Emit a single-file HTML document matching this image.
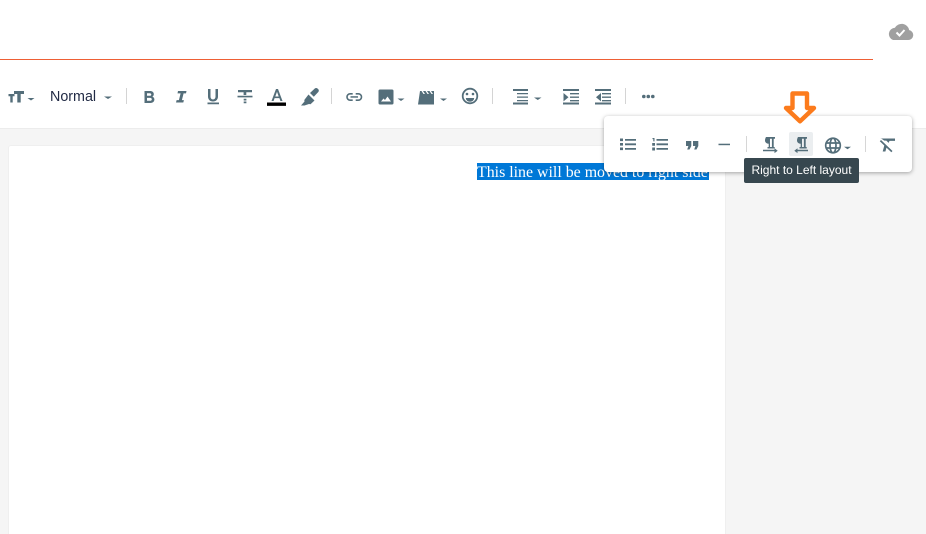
<!DOCTYPE html>
<html>
<head>
<meta charset="utf-8">
<style>
html,body{margin:0;padding:0;background:#fff;}
body{width:926px;height:534px;position:relative;overflow:hidden;font-family:"Liberation Sans",sans-serif;}
.a{position:absolute;}
svg{position:absolute;left:0;top:0;}
</style>
</head>
<body>
<div class="a" style="left:0;top:59px;width:873px;height:1px;background:#ee5f35"></div>
<div class="a" style="left:0;top:128px;width:926px;height:406px;background:#f5f5f5;border-top:1px solid #ececec;box-sizing:border-box"></div>
<div class="a" style="left:8px;top:145px;width:718px;height:389px;background:#fff;border:1px solid #efefef;border-bottom:0;box-sizing:border-box;border-radius:3px 3px 0 0"></div>
<div class="a" style="left:477px;top:163px;width:232px;height:17px;background:#0078d7"></div>
<div class="a" style="left:477px;top:164px;width:232px;height:17px;color:#fff;font:15.9px/17px 'Liberation Serif',serif;white-space:nowrap">This line will be moved to right side</div>
<div class="a" style="left:50px;top:89px;font:14.3px/17px 'Liberation Sans',sans-serif;color:#222b45;white-space:nowrap">Normal</div>

<svg width="926" height="534" viewBox="0 0 926 534" xmlns="http://www.w3.org/2000/svg">
<!-- cloud -->
<path d="M893 40h15a5 5 0 0 0 1.200-9.900a7.700 7.700 0 0 0-14.300-2.300a6.300 6.300 0 0 0-1.900 12.200z" fill="#a0a0a0"/>
<path d="M896.500 32.500l3 3l5-5.500" fill="none" stroke="#fff" stroke-width="2"/>
<g fill="#546e7a" stroke="none">
<!-- text size -->
<path d="M14 91h10v3h-3.300v8.500h-3.400v-8.500h-3.300z"/><path d="M8.500 94h6v2.200h-1.800v6.300h-2.400v-6.300h-1.800z"/>
<path d="M27.500 98h7l-3.500 2.500z"/>
<path d="M104 96.500h8l-4 2.500z"/>
<!-- B -->
<path d="M144.500 91h5.500c2.400 0 3.800 1.300 3.800 3.200c0 1.100-.6 2-1.500 2.400c1.300.4 2.100 1.500 2.100 2.800c0 2.200-1.600 3.600-4.100 3.600h-5.800zM147 93.200v2.600h2.700c1 0 1.600-.5 1.600-1.300s-.6-1.300-1.600-1.300zM147 97.900v2.900h3.100c1.100 0 1.700-.6 1.700-1.450s-.6-1.450-1.700-1.450z"/>
<!-- I -->
<path d="M178 91h8.500l-.5 2.400h-2.400l-1.700 6.700h2l-.6 2.400h-7.300l.6-2.400h2.300l1.700-6.700h-3.100z"/>
<!-- U -->
<path d="M208 89h2.500v7.500c0 1.800 1 2.900 2.500 2.900s2.500-1.100 2.500-2.900V89h2.500v7.500c0 3-2 5-5 5s-5-2-5-5zM207.500 102.500h11.500v1.800h-11.500z"/>
<!-- S -->
<path d="M238 90h14v2.200h-5.700v2.800h-2.700v-2.800H238zM237.500 95.800h15v1.600h-15zM243.700 98.700h2.700v1.800h-2.700zM243.700 101.500h2.700v1.800h-2.700z"/>
<!-- A color -->
<path d="M276 89h2l4.500 12h-2.100l-1-2.900h-4.800l-1 2.900h-2.100zM277 91.700l-1.700 4.800h3.400z"/>
<path d="M267 102.500h19v3.400h-19z" fill="#000"/>
<!-- marker -->
<path d="M308.500 94.500l6 6l-4 3.800l-1.500-.3l-4.500 1.500h-3.500l3.500-4l-.2-1.500zM310 93l4.800-4.500a2.200 2.200 0 0 1 2.700 0l.8.800a2.200 2.200 0 0 1 0 2.700l-4.500 4.800z"/>
<!-- image -->
<path d="M380 89.500h12a1.500 1.500 0 0 1 1.500 1.500v12a1.500 1.500 0 0 1-1.500 1.500h-12a1.500 1.500 0 0 1-1.500-1.500V91a1.500 1.500 0 0 1 1.500-1.500z"/>
<path d="M381 101.500l2.500-3l1.500 1.500l2.500-3.500l3.500 5z" fill="#fff"/>
<path d="M397.500 98.500h7l-3.500 2.500z"/>
<!-- clapper -->
<path d="M420 91h1.500l2 3h1.500l-2-3h2.500l2 3h1.500l-2-3h2.500l2 3h1.500l-2-3h3v13.500h-16z"/>
<path d="M440 98.500h7l-3.500 2.500z"/>
<!-- align -->
<path d="M513 89h15v2h-15zM517 93h11v1.300h-11zM517 96.500h11v1.300h-11zM517 100h11v1.300h-11zM513 102.500h15v2h-15z"/>
<path d="M534 97.500h7.500l-3.750 2.500z"/>
<!-- indent -->
<path d="M563 89h16v2h-16zM570 93h9v1.400h-9zM570 96.500h9v1.400h-9zM570 100h9v1.400h-9zM563 102.500h16v2h-16zM563.500 93l5 4.200l-5 4.200z"/>
<!-- outdent -->
<path d="M595 89h16v2h-16zM602 93h9v1.400h-9zM602 96.500h9v1.400h-9zM602 100h9v1.400h-9zM595 102.500h16v2h-16zM601 93l-5 4.200l5 4.200z"/>
<!-- more -->
<circle cx="643.800" cy="96.500" r="1.800"/><circle cx="648.300" cy="96.500" r="1.800"/><circle cx="652.800" cy="96.500" r="1.800"/>
</g>
<!-- link -->
<rect x="347" y="93.800" width="14.500" height="6.400" rx="3.200" fill="none" stroke="#546e7a" stroke-width="1.600"/>
<rect x="350.500" y="96.200" width="7.500" height="1.500" fill="#546e7a"/>
<rect x="352.700" y="92" width="3" height="3" fill="#fff"/><rect x="352.700" y="99" width="3" height="3" fill="#fff"/>
<!-- smiley -->
<circle cx="470" cy="96" r="7.300" fill="none" stroke="#546e7a" stroke-width="1.800"/>
<circle cx="467" cy="94" r="1.300" fill="#546e7a"/><circle cx="473" cy="94" r="1.300" fill="#546e7a"/>
<path d="M465.800 98h8.400a4.200 3.800 0 0 1-8.400 0z" fill="#546e7a"/>
<!-- separators -->
<g fill="#d4d4d4">
<rect x="126" y="88" width="1" height="16"/>
<rect x="331" y="88" width="1" height="16"/>
<rect x="492" y="88" width="1" height="16"/>
<rect x="625" y="88" width="1" height="16"/>
</g>
</svg>

<!-- popup -->
<div class="a" style="left:604px;top:116px;width:308px;height:56px;background:#fff;border-radius:4px;box-shadow:0 1px 4px rgba(0,0,0,.35)"></div>
<div class="a" style="left:789px;top:132px;width:24px;height:24px;background:#ebeef0;border-radius:2px"></div>

<svg width="926" height="534" viewBox="0 0 926 534" xmlns="http://www.w3.org/2000/svg">
<!-- arrow -->
<path d="M792.500 93.500h14.500v14.500h7L800 121.300L786 108h6.500z" fill="#fff" stroke="#fc7b1c" stroke-width="4.400" stroke-linejoin="round"/>
<g fill="#546e7a">
<!-- list -->
<path d="M620 138.500h3v2.600h-3zM620 143h3v2.600h-3zM620 147.500h3v2.600h-3zM625 139h11v1.800h-11zM625 143.400h11v1.800h-11zM625 148h11v1.800h-11z"/>
<!-- ordered -->
<path d="M652.500 138h2v3.400h-1.200v-2.300h-.8zM652.200 143h2.800v2.800h-2.800zM652.200 147.500h2.800v3h-2.800zM656.500 139h11.500v1.800h-11.500zM656.500 143.400h11.500v1.800h-11.500zM656.500 148h11.500v1.800h-11.500z"/>
<!-- quote -->
<path d="M686 141h5.300v5l-1.800 3.500h-2.300l1.200-3.500H686zM693 141h5.300v5l-1.800 3.500h-2.300l1.200-3.500H693z"/>
<!-- hr -->
<path d="M718.500 143.700h11.500v1.500h-11.500z"/>
<!-- LTR -->
<path d="M766 137h9v1.700h-1.300v8.300h1v1.500h-7.200V147h1.200v-3.200c-2.300-.2-3.700-1.500-3.700-3.300s1-3.500 1-3.500zM770 138.700v8.300h1.900v-8.300zM763 149.800h11.500v-1.500l3.200 2.400l-3.200 2.400v-1.800H763z"/>
<!-- RTL -->
<path d="M798 137h9v1.700h-1.300v8.300h1v1.500h-7.200V147h1.200v-3.200c-2.300-.2-3.700-1.500-3.700-3.300s1-3.500 1-3.500zM802 138.700v8.300h1.900v-8.300zM808 149.800h-10.500v-1.500l-3.200 2.400l3.200 2.400v-1.800H808z"/>
<path d="M844 146.800h7l-3.500 2.500z"/>
<!-- clear -->
<path d="M880 138.500h15v2.400h-5.500l-.9 2l-2.300-2.300h-2l-3-2zM884.500 144.800l2.200 2l-1.300 4.700h-2.700zM881 140l11.500 11l-1.200 1.200l-11.500-11z"/>
</g>
<!-- globe -->
<g fill="none" stroke="#546e7a" stroke-width="1.700">
<circle cx="833" cy="145.500" r="7.300"/>
<ellipse cx="833" cy="145.500" rx="3" ry="7.300"/>
<path d="M826 143h14M826 148h14"/>
</g>
<rect x="746" y="136" width="1" height="16" fill="#d6d6d6"/>
<rect x="865" y="136" width="1" height="16" fill="#d6d6d6"/>
</svg>

<div class="a" style="left:744px;top:158px;width:115px;height:25px;background:#37474f;border-radius:2px;color:#fff;font:12px/24px 'Liberation Sans',sans-serif;text-align:center;white-space:nowrap">Right to Left layout</div>
</body>
</html>
